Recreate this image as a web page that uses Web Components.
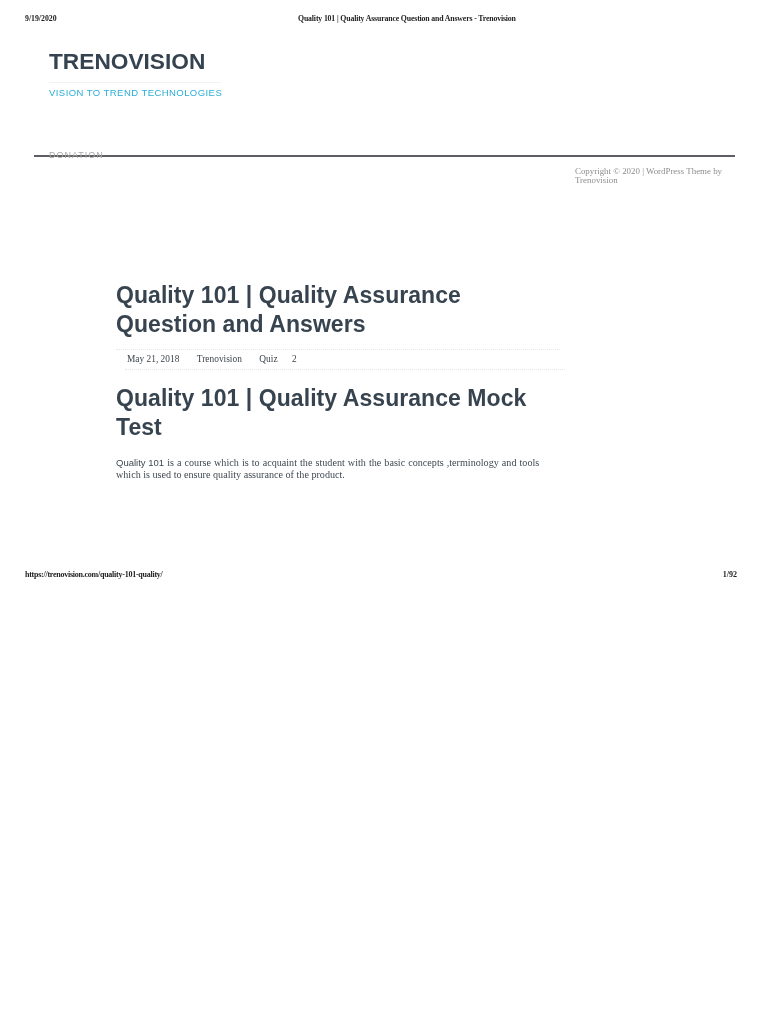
<!DOCTYPE html>
<html lang="en"><head><meta charset="utf-8"><title>Quality 101 | Quality Assurance Question and Answers - Trenovision</title>
<style>
html,body{margin:0;padding:0;background:#fff}
body{width:768px;height:1024px;overflow:hidden;font-family:"Liberation Serif",serif}
</style></head><body>
<print-page>
  <print-bar left="9/19/2020" center="Quality 101 | Quality Assurance Question and Answers - Trenovision"></print-bar>
  <site-header title="TRENOVISION" tagline="VISION TO TREND TECHNOLOGIES"></site-header>
  <site-nav label="DONATION"></site-nav>
  <site-copy>Copyright © 2020 | WordPress Theme by Trenovision</site-copy>
  <post-article>
    <post-heading>Quality 101 | Quality Assurance Question and Answers</post-heading>
    <post-meta><span>May 21, 2018</span><span>Trenovision</span><span>Quiz</span><span>2</span></post-meta>
    <post-heading>Quality 101 | Quality Assurance Mock Test</post-heading>
    <post-text><span class="l one"><sans-term>Quality 101</sans-term> is a course which is to acquaint the student with the basic concepts ,terminology and tools</span><span class="l">which is used to ensure quality assurance of the product.</span></post-text>
  </post-article>
  <print-foot url="https://trenovision.com/quality-101-quality/" page="1/92"></print-foot>
</print-page>
<script>
function def(name, css, html, setup){
  customElements.define(name, class extends HTMLElement{
    constructor(){super();const s=this.attachShadow({mode:'open'});
      s.innerHTML='<style>'+css+'</style>'+html;}
    connectedCallback(){ if(setup) setup(this, this.shadowRoot); }
  });
}
def('print-page',':host{display:flex;flex-direction:column;width:768px;height:1024px;filter:blur(.35px)}','<slot></slot>');
def('print-bar',`:host{display:grid;grid-template-columns:273px auto 1fr;padding:13px 25px 0;height:20px;box-sizing:content-box;font:bold 7.8px/11px "Liberation Serif",serif;color:#222}
 #c{letter-spacing:-.15px}`,
 '<span id="l"></span><span id="c"></span><span></span>',(h,s)=>{s.getElementById('l').textContent=h.getAttribute('left');s.getElementById('c').textContent=h.getAttribute('center');});
def('site-header',`:host{display:block;padding:13px 0 0 49px;height:108.5px;box-sizing:content-box}
 h1{margin:0;font:bold 22.7px/31px "Liberation Sans",sans-serif;color:#35424f}
 hr{margin:5px 0 0;border:0;border-top:1px solid #f2f2f2;width:172px}
 p{margin:3.5px 0 0;font:9.5px/12px "Liberation Sans",sans-serif;letter-spacing:.44px;color:#2aaed9}`,
 '<h1 id="t"></h1><hr><p id="g"></p>',(h,s)=>{s.getElementById('t').textContent=h.getAttribute('title');s.getElementById('g').textContent=h.getAttribute('tagline');});
def('site-nav',`:host{display:block;margin:0 33px 0 34px;height:2px;background:#5d5f62;padding-left:15px;font:9px/0px "Liberation Sans",sans-serif;letter-spacing:1px;color:#a9a9a9}`,
 '<span id="n"></span>',(h,s)=>{s.getElementById('n').textContent=h.getAttribute('label');});
def('site-copy',`:host{display:block;margin:10px 0 0 575px;width:160px;height:114.5px;font:8.9px/9px "Liberation Serif",serif;color:#8d8d8d}`,'<slot></slot>');
def('post-article',`:host{display:flex;flex-direction:column;margin-left:116px;width:450px;height:288px}`,'<slot></slot>');
def('post-heading',`:host{display:block;font:bold 23px/29px "Liberation Sans",sans-serif;color:#37444f;letter-spacing:.06px;width:430px}`,'<slot></slot>');
def('post-meta',`:host{display:block;margin:10px 0 14px;width:444px;border-top:1px dotted #e6e6e6}
 div{display:flex;gap:17.5px;box-sizing:border-box;margin-left:9px;width:440px;height:20px;padding-left:2px;border-bottom:1px dotted #e6e6e6;font:9.4px/19px "Liberation Serif",serif;color:#3c444b}
 ::slotted(:last-child){margin-left:-3px}`,'<div><slot></slot></div>');
def('post-text',`:host{display:block;margin-top:15px;width:430px;font:10.15px/12px "Liberation Serif",serif;color:#3f4850}
 ::slotted(.l){display:block;white-space:nowrap}
 ::slotted(.one){word-spacing:.55px}`,'<slot></slot>');
def('sans-term',`:host{display:inline;font:9.5px "Liberation Sans",sans-serif;word-spacing:0}`,'<slot></slot>');
def('print-foot',`:host{display:flex;justify-content:space-between;padding:0 31px 0 25px;font:bold 8px/11px "Liberation Serif",serif;color:#222}
 #u{letter-spacing:-.25px}`,
 '<span id="u"></span><span id="p"></span>',(h,s)=>{s.getElementById('u').textContent=h.getAttribute('url');s.getElementById('p').textContent=h.getAttribute('page');});
</script>
</body></html>
